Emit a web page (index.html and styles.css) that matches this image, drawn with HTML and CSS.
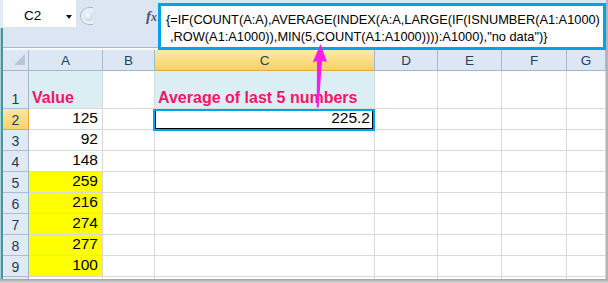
FILE: index.html
```html
<!DOCTYPE html>
<html lang="en">
<head>
    <meta charset="UTF-8">
    <title>Average of last 5 numbers</title>
    <link rel="stylesheet" href="styles.css">
</head>
<body>
<div class="frame">
  <div class="window">
    <div class="edge"></div>
    <div class="main">
      <div class="formula-bar">
        <div class="bar-left">
          <div class="bar-top">
            <div class="namebox"><span>C2</span><span class="drop"></span></div>
            <div class="grip"><span class="knob"></span></div>
            <div class="fx">f<span>x</span></div>
          </div>
        </div>
        <div class="formula">
          <div class="line">{=IF(COUNT(A:A),AVERAGE(INDEX(A:A,LARGE(IF(ISNUMBER(A1:A1000)</div>
          <div class="line wrap">,ROW(A1:A1000)),MIN(5,COUNT(A1:A1000)))):A1000),&quot;no data&quot;)}</div>
        </div>
      </div>

      <div class="grid">
        <div class="hd corner"></div>
        <div class="hd">A</div>
        <div class="hd">B</div>
        <div class="hd on">C</div>
        <div class="hd">D</div>
        <div class="hd">E</div>
        <div class="hd">F</div>
        <div class="hd">G</div>

        <div class="rh">1</div>
        <div class="c tint title">Value</div>
        <div class="c"></div>
        <div class="c tint title">Average of last 5 numbers</div>
        <div class="c"></div><div class="c"></div><div class="c"></div><div class="c"></div>

        <div class="rh on">2</div>
        <div class="c">125</div>
        <div class="c"></div>
        <div class="c sel">225.2</div>
        <div class="c"></div><div class="c"></div><div class="c"></div><div class="c"></div>

        <div class="rh">3</div>
        <div class="c">92</div>
        <div class="c"></div><div class="c"></div><div class="c"></div><div class="c"></div><div class="c"></div><div class="c"></div>

        <div class="rh">4</div>
        <div class="c">148</div>
        <div class="c"></div><div class="c"></div><div class="c"></div><div class="c"></div><div class="c"></div><div class="c"></div>

        <div class="rh">5</div>
        <div class="c yel">259</div>
        <div class="c"></div><div class="c"></div><div class="c"></div><div class="c"></div><div class="c"></div><div class="c"></div>

        <div class="rh">6</div>
        <div class="c yel">216</div>
        <div class="c"></div><div class="c"></div><div class="c"></div><div class="c"></div><div class="c"></div><div class="c"></div>

        <div class="rh">7</div>
        <div class="c yel">274</div>
        <div class="c"></div><div class="c"></div><div class="c"></div><div class="c"></div><div class="c"></div><div class="c"></div>

        <div class="rh">8</div>
        <div class="c yel">277</div>
        <div class="c"></div><div class="c"></div><div class="c"></div><div class="c"></div><div class="c"></div><div class="c"></div>

        <div class="rh">9</div>
        <div class="c yel">100</div>
        <div class="c"></div><div class="c"></div><div class="c"></div><div class="c"></div><div class="c"></div><div class="c"></div>

        <div class="rh"></div>
        <div class="c"></div><div class="c"></div><div class="c"></div><div class="c"></div><div class="c"></div><div class="c"></div><div class="c"></div>
      </div>
    </div>

    <!-- pointer from the result cell up to the formula -->
    <svg class="arrow" width="25" height="72" viewBox="305 40 25 72">
      <polygon points="320.5,44 327,62 322,61 318.7,107.5 316.7,107.5 317,61 312.7,62.5" fill="#f21ef0"/>
    </svg>
  </div>
</div>
</body>
</html>
```

FILE: styles.css
```css
* {
    box-sizing: border-box;
}
body {
    margin: 0;
    font-family: "Liberation Sans", Arial, sans-serif;
}
.frame {
    width: 608px;
    height: 283px;
    overflow: hidden;
    background: linear-gradient(to bottom, #b4b4b4 279px, #a2a2a2 279px, #dadada 283px);
}
.window {
    position: relative;
    width: 606px;
    height: 279px;
    display: flex;
    background: #fff;
    overflow: hidden;
}
.edge {
    width: 3px;
    flex: none;
    background:
        linear-gradient(#e4ebf4, #e4ebf4) top / 3px 28px no-repeat,
        linear-gradient(to right, #a9d0d4 1px, #3d9aa3 1px);
}
.main {
    flex: 1;
    display: flex;
    flex-direction: column;
}

/* formula bar */
.formula-bar {
    height: 50px;
    flex: none;
    display: flex;
    background: #dce6f2;
}
.bar-left {
    width: 155px;
    height: 50px;
    border-bottom: 2px solid #f5f8fc;
}
.bar-top {
    height: 48px;
    display: flex;
    align-items: flex-start;
    border-bottom: 1px solid #a4b7ce;
}
.namebox {
    width: 73px;
    height: 27px;
    display: flex;
    align-items: flex-start;
    padding: 8px 0 0 21px;
    background: #fff;
    font-size: 13.5px;
    line-height: 16px;
    color: #000;
}
.drop {
    margin: 7px 4px 0 auto;
    border-left: 3px solid transparent;
    border-right: 3px solid transparent;
    border-top: 4px solid #111;
}
.grip {
    width: 13px;
    height: 18px;
    margin: 7px 0 0 4px;
    display: flex;
    align-items: center;
    padding-left: 3px;
    border: 1px solid #aabbd0;
    border-right: none;
    border-radius: 9px 0 0 9px;
    background: #e8eef6;
}
.knob {
    width: 9px;
    height: 9px;
    border-radius: 50%;
    background: radial-gradient(circle at 40% 35%, #fdfdfe, #b9c5d4);
}
.fx {
    margin: 8px 1px 0 auto;
    font-family: "Liberation Serif", serif;
    font-style: italic;
    font-weight: bold;
    font-size: 15px;
    line-height: 16px;
    color: #4a5868;
}
.fx span {
    font-size: 12px;
}
.formula {
    width: 448px;
    height: 47px;
    margin-top: 3px;
    padding: 5px 0 0 5px;
    border: 3px solid #00a2e8;
    background: #fff;
    font-size: 12.8px;
    line-height: 17px;
    white-space: nowrap;
    color: #000;
}
.formula .wrap {
    padding-left: 4px;
}

/* sheet */
.grid {
    flex: 1;
    display: grid;
    grid-template-columns: 26px 74px 52px 220px 63px 64px 65px 1fr;
    grid-template-rows: 21px 38px repeat(8, 21px) 1fr;
}
.hd {
    display: flex;
    align-items: center;
    justify-content: center;
    background: #dde7f3;
    border-right: 1px solid #a3b9d2;
    border-bottom: 1px solid #9eb6ce;
    font-size: 13.5px;
    color: #243f61;
}
.hd.on {
    background: linear-gradient(#fde9a6, #f9d165);
    border-bottom-color: #e5a83c;
}
.corner {
    justify-content: flex-end;
    align-items: flex-end;
    padding: 0 3px 5px 0;
}
.corner::after {
    content: "";
    border-left: 11px solid transparent;
    border-bottom: 11px solid #b6c5d7;
}
.rh {
    display: flex;
    align-items: flex-end;
    justify-content: center;
    padding-bottom: 1px;
    background: #e0e9f4;
    border-right: 1px solid #9eb6ce;
    border-bottom: 1px solid #a9bdd4;
    font-size: 14px;
    line-height: 16px;
    color: #1f3a5c;
}
.rh.on {
    background: linear-gradient(#fde7a2, #f9d26a);
    border-bottom-color: #e5a83c;
    border-right-color: #e5a83c;
}
.c {
    display: flex;
    align-items: flex-end;
    justify-content: flex-end;
    padding: 0 4px 3px 2px;
    border-right: 1px solid #d9d9d9;
    border-bottom: 1px solid #d9d9d9;
    font-size: 15.5px;
    line-height: 16px;
    color: #000;
}
.tint {
    background: #daeef3;
}
.yel {
    background: #ffff00;
}
.title {
    justify-content: flex-start;
    padding: 0 0 2px 3px;
    font-size: 16px;
    font-weight: bold;
    color: #f7146a;
}
.sel {
    position: relative;
}
.sel::after {
    content: "";
    position: absolute;
    left: -2px;
    top: 0;
    right: -1px;
    bottom: -2px;
    z-index: 1;
    border: 2px solid #00a2e8;
    box-shadow: inset 1px -1px 0 #000, inset -1px 0 0 #000;
}
.arrow {
    position: absolute;
    left: 305px;
    top: 40px;
    z-index: 2;
}
```
